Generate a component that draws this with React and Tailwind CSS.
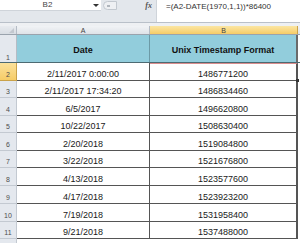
import React from "react";

const rows = [
  ["2", "2/11/2017 0:00:00", "1486771200", "h-[18px]"],
  ["3", "2/11/2017 17:34:20", "1486834460", "h-[17px]"],
  ["4", "6/5/2017", "1496620800", "h-[18px]"],
  ["5", "10/22/2017", "1508630400", "h-[17px]"],
  ["6", "2/20/2018", "1519084800", "h-[18px]"],
  ["7", "3/22/2018", "1521676800", "h-[17px]"],
  ["8", "4/13/2018", "1523577600", "h-[18px]"],
  ["9", "4/17/2018", "1523923200", "h-[18px]"],
  ["10", "7/19/2018", "1531958400", "h-[18px]"],
  ["11", "9/21/2018", "1537488000", "h-[17px]"],
];

export default function App() {
  return (
    <div className="w-[300px] h-[243px] overflow-hidden bg-white font-['Liberation_Sans',Arial,sans-serif] text-[#222]">
      {/* formula bar */}
      <div className="flex h-[23px] bg-[#e3e7ec] border-b border-[#b9c0c9]">
        <div className="w-[156px] flex flex-col">
          <div className="flex h-[11px] items-center">
            <div className="relative w-[101px] h-[11px] bg-white border-b border-[#cfd4da] flex items-center justify-center">
              <span className="text-[8px] leading-none text-[#444] -ml-[6px]">B2</span>
              <div className="absolute right-[2px] top-[4px] w-0 h-0 border-l-[3px] border-r-[3px] border-t-[3px] border-l-transparent border-r-transparent border-t-[#333]" />
            </div>
            <div className="ml-[2px] w-[14px] h-[9px] rounded-l-full border border-[#c2c8cf] bg-[#eef0f3] flex items-center pl-[3px]">
              <div className="w-[3px] h-[2px] border-y border-[#b0b6bd]" />
            </div>
            <div className="flex-1" />
            <span className="text-[8px] leading-none italic font-bold text-[#555] mr-[4px] font-['Liberation_Serif',serif]">fx</span>
          </div>
          <div className="flex-1 bg-[#e3e7ec]" />
        </div>
        <div className="flex-1 bg-white border-l border-[#cfd4da] pl-[9px] pt-[3px]">
          <span className="text-[8px] leading-none text-[#333] block">=(A2-DATE(1970,1,1))*86400</span>
        </div>
      </div>
      <div className="h-[3px] bg-[#eef0f3]" />
      {/* column headers */}
      <div className="flex h-[9px] border-b border-[#9aa3ad]">
        <div className="w-[17px] bg-gradient-to-b from-[#e8ebef] to-[#d8dde3] border-r border-[#b5bcc5] flex items-end justify-end pr-[2px] pb-[1px]">
          <svg width="5" height="5" viewBox="0 0 5 5">
            <polygon points="5,0 5,5 0,5" fill="#c3c8cf" />
          </svg>
        </div>
        <div className="w-[133px] bg-gradient-to-b from-[#f1f3f6] to-[#dfe3e8] border-r border-[#b5bcc5] flex items-center justify-center">
          <span className="text-[7px] leading-none text-[#444]">A</span>
        </div>
        <div className="w-[148px] bg-gradient-to-b from-[#fbe6a2] to-[#f6cc66] border-r border-[#c9a24a] flex items-center justify-center">
          <span className="text-[7px] leading-none text-[#444]">B</span>
        </div>
        <div className="flex-1 bg-gradient-to-b from-[#f1f3f6] to-[#dfe3e8]" />
      </div>
      {/* row 1 */}
      <div className="flex h-[28px] border-b border-[#4d6a72]">
        <div className="w-[17px] bg-[#e4e8ee] border-r border-[#b5bcc5] flex items-end justify-center pb-[1px]">
          <span className="text-[7px] leading-none text-[#4d4d4d]">1</span>
        </div>
        <div className="w-[133px] bg-[#92cddc] border-r border-[#6c9aa6] flex items-center justify-center pt-[3px]">
          <span className="text-[9px] leading-none font-bold text-[#111]">Date</span>
        </div>
        <div className="w-[148px] bg-[#92cddc] border-r-2 border-[#6a6a6a] flex items-center justify-center pt-[3px]">
          <span className="text-[9px] leading-none font-bold text-[#111]">Unix Timestamp Format</span>
        </div>
        <div className="flex-1 bg-white" />
      </div>
      {rows.map(([n, a, b, h], i) => (
        <div key={n} className={`flex ${h}`}>
          <div
            className={
              i === 0
                ? "w-[17px] bg-gradient-to-b from-[#fbe19a] to-[#f6cc66] border-r border-b border-[#c9a24a] flex items-end justify-center pb-[2px]"
                : "w-[17px] bg-[#e4e8ee] border-r border-b border-[#c3c9d1] flex items-end justify-center pb-[2px]"
            }
          >
            <span className="text-[7px] leading-none text-[#4d4d4d]">{n}</span>
          </div>
          <div className="w-[133px] bg-white border-r border-b border-[#555] flex items-end justify-center pb-[1px]">
            <span className="text-[9px] leading-none text-[#1a1a1a]">{a}</span>
          </div>
          <div
            className={
              i === 0
                ? "relative w-[148px] bg-white border-r-2 border-b border-t border-t-[#d98c8c] border-[#555] flex items-end justify-center pb-[1px]"
                : "w-[148px] bg-white border-r-2 border-b border-[#555] flex items-end justify-center pb-[1px]"
            }
          >
            <span className="text-[9px] leading-none text-[#1a1a1a]">{b}</span>
            {i === 0 && <div className="absolute -right-[3px] -bottom-[2px] w-[3px] h-[3px] bg-[#333]" />}
          </div>
          <div className="flex-1 bg-white" />
        </div>
      ))}
      <div className="flex h-[10px]">
        <div className="w-[17px] bg-[#e4e8ee] border-r border-[#c3c9d1] flex items-start justify-center pt-[3px]">
          <span className="text-[7px] leading-none text-[#4d4d4d]">12</span>
        </div>
        <div className="flex-1 bg-white" />
      </div>
    </div>
  );
}
